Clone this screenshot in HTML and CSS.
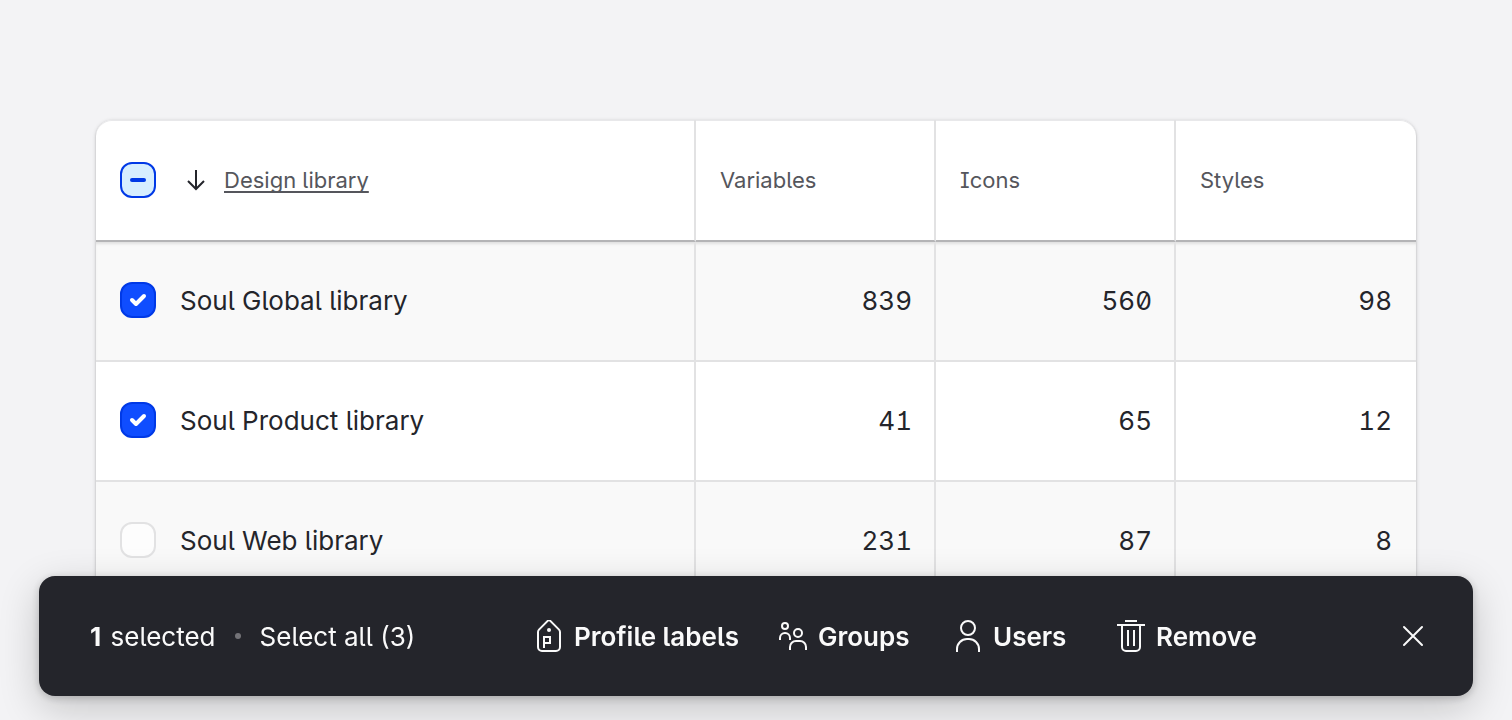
FILE: index.html
```html
<!DOCTYPE html>
<html lang="en">
  <head>
    <meta charset="UTF-8" />
    <meta name="viewport" content="width=device-width, initial-scale=1.0" />
    <title>Design libraries</title>
    <link rel="stylesheet" href="styles.css">
  </head>
  <body>
    <main class="container">
      <table class="table">
        <thead>
          <tr>
            <th class="name-col" scope="col">
              <div class="cell">
                <span class="checkbox">
                  <input type="checkbox" id="check-all" class="mixed" aria-label="Select all rows" />
                  <svg viewBox="0 0 36 36"><path d="M12 18h12" /></svg>
                </span>
                <a href="#" class="sort">
                  <svg class="arrow" viewBox="0 0 24 24"><path d="M12 2v19M4 13l8 8 8-8" /></svg>
                  <span>Design library</span>
                </a>
              </div>
            </th>
            <th scope="col">Variables</th>
            <th scope="col">Icons</th>
            <th scope="col">Styles</th>
          </tr>
        </thead>
        <tbody>
          <tr>
            <td>
              <div class="cell">
                <span class="checkbox">
                  <input type="checkbox" id="global" checked />
                  <svg viewBox="0 0 36 36"><path d="M12 18l4 4 8-8" /></svg>
                </span>
                <label for="global">Soul Global library</label>
              </div>
            </td>
            <td class="num">839</td>
            <td class="num">560</td>
            <td class="num">98</td>
          </tr>
          <tr>
            <td>
              <div class="cell">
                <span class="checkbox">
                  <input type="checkbox" id="product" checked />
                  <svg viewBox="0 0 36 36"><path d="M12 18l4 4 8-8" /></svg>
                </span>
                <label for="product">Soul Product library</label>
              </div>
            </td>
            <td class="num">41</td>
            <td class="num">65</td>
            <td class="num">12</td>
          </tr>
          <tr>
            <td>
              <div class="cell">
                <span class="checkbox">
                  <input type="checkbox" id="web" />
                  <svg viewBox="0 0 36 36"><path d="M12 18l4 4 8-8" /></svg>
                </span>
                <label for="web">Soul Web library</label>
              </div>
            </td>
            <td class="num">231</td>
            <td class="num">87</td>
            <td class="num">8</td>
          </tr>
        </tbody>
      </table>
    </main>

    <div class="action-bar">
      <div class="selection">
        <span class="count"><b>1</b> selected</span>
        <span class="dot"></span>
        <button type="button">Select all (3)</button>
      </div>

      <div class="actions">
        <button type="button">
          <svg viewBox="0 0 32 32">
            <path d="M15 .6a1.400 1.400 0 0 1 2 0l9 9a3.500 3.500 0 0 1 1 2.400V27a4 4 0 0 1-4 4H9a4 4 0 0 1-4-4V12a3.500 3.500 0 0 1 1-2.400z" />
            <path d="M11 28V17h6v6h-6" />
            <circle class="fill" cx="16" cy="10" r="2" />
          </svg>
          <span>Profile labels</span>
        </button>
        <button type="button">
          <svg viewBox="0 0 32 32">
            <circle cx="8" cy="6" r="3" />
            <path d="M3 20v-2a5 5 0 0 1 10 0v2" />
            <circle cx="21" cy="13" r="4" />
            <path d="M13 30v-3a6 6 0 0 1 6-6h4a6 6 0 0 1 6 6v3" />
          </svg>
          <span>Groups</span>
        </button>
        <button type="button">
          <svg viewBox="0 0 32 32">
            <circle cx="16" cy="8" r="7" />
            <path d="M5 32v-3a10 10 0 0 1 10-10h2a10 10 0 0 1 10 10v3" />
          </svg>
          <span>Users</span>
        </button>
        <button type="button">
          <svg viewBox="0 0 32 32">
            <path d="M10 1h12M2 5h28" />
            <path d="M7 5v22a4 4 0 0 0 4 4h10a4 4 0 0 0 4-4V5" />
            <path d="M13 10v16M19 10v16" />
          </svg>
          <span>Remove</span>
        </button>
      </div>

      <button type="button" class="close" aria-label="Close">
        <svg viewBox="0 0 32 32"><path d="M7 7l18 18M25 7L7 25" /></svg>
      </button>
    </div>

    <script>
      const checkAll = document.querySelector('#check-all');
      checkAll.indeterminate = true;
    </script>
  </body>
</html>
```
FILE: styles.css
```css
* {
  box-sizing: border-box;
}

body {
  margin: 0;
  background: #f3f3f5;
  color: #24252b;
  font-family: Inter, 'Liberation Sans', sans-serif;
  font-size: 26px;
  line-height: 36px;
  font-feature-settings: 'ss02', 'zero';
}

svg {
  display: block;
  fill: none;
  stroke: currentColor;
  stroke-width: 2;
}

button {
  padding: 0;
  border: 0;
  background: none;
  color: inherit;
  font: inherit;
  font-feature-settings: inherit;
  cursor: pointer;
}

.container {
  padding: 120px 96px 0;
}

/* table */
.table {
  width: 100%;
  table-layout: fixed;
  border-collapse: separate;
  border-spacing: 0;
  background: #fff;
  border-radius: 16px;
  box-shadow: inset 0 1px 0 #e8e8ea, 0 1px 2px rgba(0, 0, 0, 0.2), 0 1px 4px rgba(0, 0, 0, 0.16);
}

th,
td {
  height: 120px;
  padding: 0 24px;
  border-right: 2px solid #e2e2e3;
  border-bottom: 2px solid #e2e2e3;
  text-align: left;
}

th {
  height: 122px;
  border-bottom-color: #b4b4b6;
  color: #55565c;
  font-size: 22px;
  font-weight: 400;
}

.name-col {
  width: 600px;
}

tbody tr:nth-child(odd) {
  background: #f9f9f9;
}

tbody tr:first-child {
  box-shadow: inset 0 3px 3px -1px rgba(0, 0, 0, 0.1);
}

.num {
  padding-right: 22px;
  text-align: right;
  font-feature-settings: 'tnum', 'zero', 'cv01';
}

th:last-child,
td:last-child {
  padding-right: 24px;
  border-right: 0;
}

.cell {
  display: flex;
  align-items: center;
  gap: 24px;
}

td .cell {
  height: 38px;
  align-items: flex-start;
}

td label {
  line-height: 38px;
}

.sort {
  display: flex;
  align-items: center;
  gap: 16px;
  padding-left: 4px;
  color: inherit;
  text-decoration: none;
}

.sort span {
  text-decoration: underline;
  text-decoration-thickness: 2px;
  text-underline-offset: 3px;
  text-decoration-skip-ink: none;
}

.arrow {
  width: 24px;
  height: 24px;
  color: #24252b;
}

/* checkbox */
.checkbox {
  display: grid;
  width: 36px;
  height: 36px;
}

.checkbox input,
.checkbox svg {
  grid-area: 1 / 1;
  width: 36px;
  height: 36px;
  margin: 0;
}

.checkbox input {
  appearance: none;
  border: 2px solid #e2e2e3;
  border-radius: 12px;
  background: #fdfdfd;
}

.checkbox svg {
  visibility: hidden;
  pointer-events: none;
  color: #fff;
  stroke-width: 4;
  stroke-linecap: round;
  stroke-linejoin: round;
}

.checkbox input:checked {
  border-color: #0039e6;
  background: #0f4dff;
}

.checkbox input.mixed {
  border-color: #0039e6;
  background: #d6eeff;
}

.checkbox input:checked + svg {
  visibility: visible;
}

.checkbox input.mixed + svg {
  visibility: visible;
  color: #0039e6;
}

/* floating bar */
.action-bar {
  position: fixed;
  left: 39px;
  right: 39px;
  bottom: 24px;
  height: 120px;
  padding: 0 44px 0 51px;
  display: flex;
  align-items: center;
  background: #24252b;
  border-radius: 16px;
  color: #fafafa;
  line-height: 38px;
  box-shadow: 0 2px 8px rgba(0, 0, 0, 0.2), 0 12px 40px rgba(0, 0, 0, 0.2);
}

.selection {
  width: 443px;
  display: flex;
  align-items: center;
  gap: 19px;
}

.count,
.selection button,
.actions span {
  padding-top: 2px;
}

.count b {
  margin-right: 2px;
}

.dot {
  width: 6px;
  height: 6px;
  border-radius: 50%;
  background: #737378;
}

.actions {
  display: grid;
  grid-template-columns: 244px 175px 163px auto;
}

.actions button {
  display: flex;
  align-items: center;
  gap: 9px;
  font-weight: 600;
}

.actions svg,
.close svg {
  width: 32px;
  height: 32px;
}

.actions .fill {
  fill: currentColor;
  stroke: none;
}

.close {
  margin-left: auto;
}

.close svg {
  stroke-linecap: round;
}
```
